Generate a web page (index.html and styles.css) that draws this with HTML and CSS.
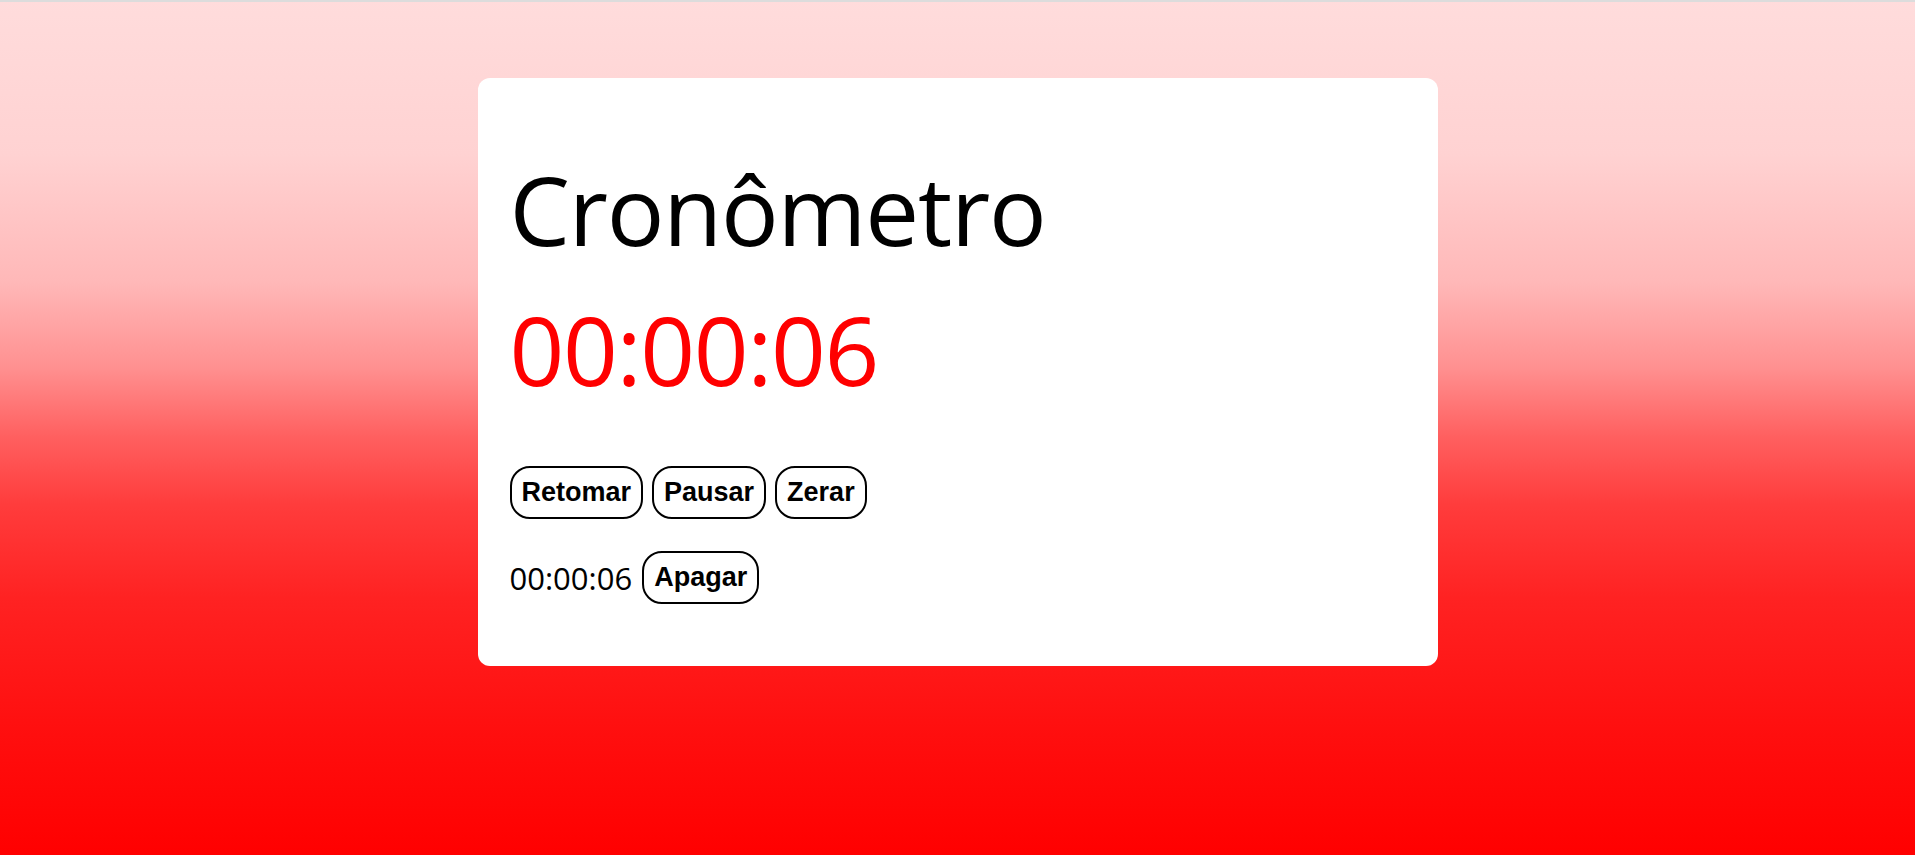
FILE: index.html
```html
<!DOCTYPE html>
<html lang="pt-BR">

<head>
  <meta charset="UTF-8" />
  <meta name="viewport" content="width=device-width, initial-scale=1" />
  <title>Cronômetro</title>
  <link rel="stylesheet" href="styles.css">
</head>

<body>
  <div id="card">
    <h1>Cronômetro</h1>
    <div id="display">00:00:06</div>

    <div class="controls">
      <button id="resumeBtn" class="btn">Retomar</button>
      <button id="pauseBtn" class="btn">Pausar</button>
      <button id="resetBtn" class="btn">Zerar</button>
    </div>

    <div id="laps">
      <div class="lap">
        <span class="lap-time">00:00:06</span>
        <button class="btn delete">Apagar</button>
      </div>
    </div>
  </div>

  <script>
    const display = document.getElementById("display");
    let seconds = 6;
    let timer = null;

    function format(s) {
      const h = String(Math.floor(s / 3600)).padStart(2, "0");
      const m = String(Math.floor((s % 3600) / 60)).padStart(2, "0");
      const sec = String(s % 60).padStart(2, "0");
      return `${h}:${m}:${sec}`;
    }

    function render() {
      display.textContent = format(seconds);
    }

    document.getElementById("resumeBtn").addEventListener("click", () => {
      if (timer) return;
      timer = setInterval(() => {
        seconds++;
        render();
      }, 1000);
    });

    document.getElementById("pauseBtn").addEventListener("click", () => {
      clearInterval(timer);
      timer = null;
    });

    document.getElementById("resetBtn").addEventListener("click", () => {
      clearInterval(timer);
      timer = null;
      seconds = 0;
      render();
    });

    document.getElementById("laps").addEventListener("click", (e) => {
      if (e.target.classList.contains("delete")) {
        e.target.parentElement.remove();
      }
    });
  </script>
</body>

</html>
```

FILE: styles.css
```css
* {
  box-sizing: border-box;
}

html {
  height: 100%;
}

body {
  margin: 0;
  min-height: 100vh;
  border-top: 2px solid #dcdcdc;
  background: linear-gradient(to bottom,
      #ffdcdc 0%,
      #ffd2d2 18%,
      #ffb8b8 33%,
      #ff9090 43%,
      #ff6060 51%,
      #ff3c3c 59%,
      #ff2222 70%,
      #ff0e0e 86%,
      #ff0000 100%);
  font-family: 'Open Sans', sans-serif;
  color: #000;
  overflow: hidden;
}

#card {
  width: 960px;
  margin: 76px auto 0;
  padding: 32px;
  background: white;
  border-radius: 12px;
}

h1 {
  margin: 33px 0 0;
  font-size: 96px;
  font-weight: normal;
  line-height: normal;
  letter-spacing: -1.2px;
}

#display {
  margin-top: 9px;
  font-size: 96px;
  color: #ff0000;
  line-height: normal;
  letter-spacing: -1.4px;
}

.controls {
  display: flex;
  gap: 9px;
  margin-top: 52px;
}

.btn {
  font-family: 'Liberation Sans', Arial, sans-serif;
  font-size: 27px;
  font-weight: bold;
  color: #000;
  background: white;
  border: 2.5px solid #000;
  border-radius: 20px;
  padding: 9px 10px;
  cursor: pointer;
}

#laps {
  margin-top: 32px;
  margin-bottom: 30px;
}

.lap {
  display: flex;
  align-items: center;
  gap: 10px;
}

.lap-time {
  font-size: 31px;
}
```
